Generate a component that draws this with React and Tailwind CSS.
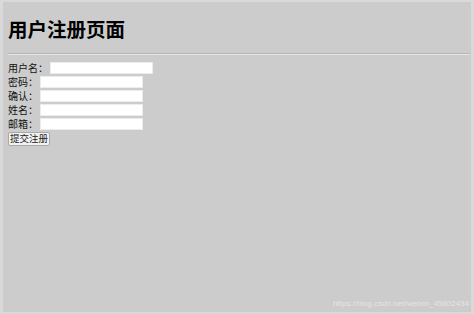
import React from "react";

const fields = [
  { label: "用户名：", type: "text", name: "username" },
  { label: "密码：", type: "password", name: "password" },
  { label: "确认：", type: "password", name: "confirm" },
  { label: "姓名：", type: "text", name: "realname" },
  { label: "邮箱：", type: "text", name: "email" },
];

export default function App() {
  return (
    <div
      className="w-[474px] h-[314px] bg-[#cccccc] border-t-2 border-l-[3px] border-r-[3px] border-b-2 border-[#d9d9d9] relative overflow-hidden text-black"
      style={{ fontFamily: '"Noto Sans CJK SC", "Liberation Sans", sans-serif' }}
    >
      <div className="pl-[5px] pr-[1px]">
        <h1 className="text-[19.5px] font-bold leading-none pt-[17px] pb-[14px]">
          用户注册页面
        </h1>
        <div className="h-px bg-[#b8b8b8]" />
        <div className="h-px bg-[#e4e4e4] mb-[6px]" />
        <form className="flex flex-col" onSubmit={(e) => e.preventDefault()}>
          {fields.map((f) => (
            <div key={f.name} className="flex items-center h-[14px] text-[10px] leading-[14px]">
              <span className="text-[#111]">{f.label}</span>
              <input
                type={f.type}
                name={f.name}
                className="ml-[2px] w-[103px] h-[12px] bg-white border border-[#ececec] outline-none"
              />
            </div>
          ))}
          <div className="flex mt-px">
            <button
              type="submit"
              className="h-[14px] w-[42px] flex items-center justify-center text-[9.5px] leading-none bg-[#f2f2f2] border border-[#a9a9a9] rounded-[2px] text-[#222]"
            >
              提交注册
            </button>
          </div>
        </form>
      </div>
      <div
        className="absolute right-[2px] bottom-[4px] text-[8px] leading-none text-[#e4e4e4]"
        style={{ fontFamily: '"Liberation Sans", sans-serif' }}
      >
        https://blog.csdn.net/weixin_45802434
      </div>
    </div>
  );
}
